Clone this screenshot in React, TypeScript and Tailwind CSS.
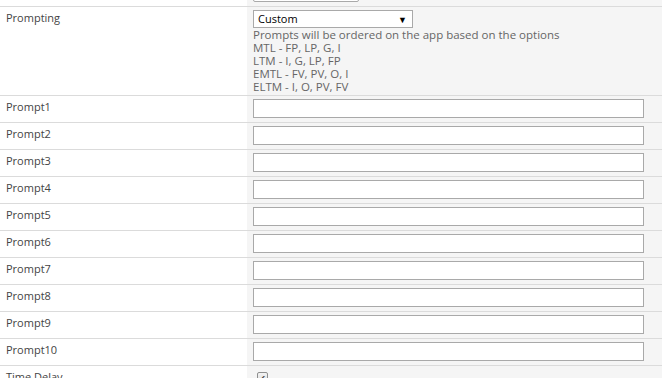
import React from "react";

const font = { fontFamily: '"Open Sans", "Noto Sans", sans-serif' };

function Row({ label, children }: { label: string; children: React.ReactNode }) {
  return (
    <div className="flex border-t border-[#dbdbdb]">
      <div className="w-[247px] shrink-0 pl-[6px] pt-[3px] text-[11px] leading-[15px] text-[#444]">{label}</div>
      <div className="flex-1 bg-[#f5f5f5] pl-[6px] pr-[19px]">{children}</div>
    </div>
  );
}

export default function App() {
  const prompts = Array.from({ length: 10 }, (_, i) => `Prompt${i + 1}`);
  return (
    <div className="w-[662px] h-[378px] overflow-hidden bg-white" style={font}>
      <div className="flex h-[6px] overflow-hidden">
        <div className="w-[247px] shrink-0" />
        <div className="flex-1 bg-[#f5f5f5] pl-[6px] flex items-end pb-[4px]">
          <div className="w-[106px] h-[20px] shrink-0 border border-[#a9a9a9] bg-white rounded-[2px]" />
        </div>
      </div>
      <Row label="Prompting">
        <div className="pt-[3px] pb-[2px]">
          <div className="w-[160px] h-[18px] border border-[#a9a9a9] bg-white flex items-center justify-between pl-[4px] pr-[5px] text-[11px] text-black">
            <span>Custom</span>
            <span className="text-[9px] leading-none">▼</span>
          </div>
          <div className="text-[11.5px] leading-[13px] text-[#666]">
            <div>Prompts will be ordered on the app based on the options</div>
            <div>MTL - FP, LP, G, I</div>
            <div>LTM - I, G, LP, FP</div>
            <div>EMTL - FV, PV, O, I</div>
            <div>ELTM - I, O, PV, FV</div>
          </div>
        </div>
      </Row>
      {prompts.map((p) => (
        <Row key={p} label={p}>
          <div className="h-[26px] pt-[3px]">
            <div className="h-[19px] w-[391px] border border-[#a9a9a9] bg-white" />
          </div>
        </Row>
      ))}
      <Row label="Time Delay">
        <div className="h-[26px] pt-[6px] pl-[4px]">
          <div className="w-[11px] h-[11px] border border-[#8e8f8f] rounded-[2px] bg-gradient-to-b from-[#f4f4f4] to-[#dcdcdc] flex items-center justify-center text-[8px] leading-none text-[#333]">✔</div>
        </div>
      </Row>
    </div>
  );
}
